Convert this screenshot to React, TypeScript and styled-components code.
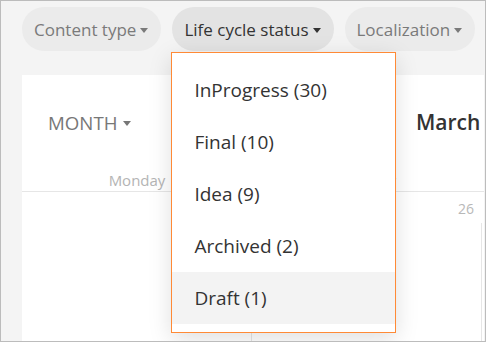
import React from 'react'
import styled, { createGlobalStyle } from 'styled-components';

const GlobalStyle = createGlobalStyle`
    html, body {
        margin: 0;
        padding: 0;
        background: #ffffff;
    }
    * {
        box-sizing: border-box;
    }
`

const Frame = styled.div`
    width: 486px;
    height: 342px;
    border: 1px solid #bcbcbc;
    background-color: #f4f4f4;
    font-family: "Open Sans", "Noto Sans", sans-serif;
    display: flex;
    flex-direction: column;
    overflow: hidden;
`

const Toolbar = styled.div`
    display: flex;
    gap: 11px;
    padding: 6px 0 0 21px;
`

const PillWrap = styled.div`
    position: relative;
`

const Pill = styled.div<{ active?: boolean }>`
    height: 44px;
    border-radius: 22px;
    padding: 0 13px 0 12px;
    display: flex;
    align-items: center;
    gap: 4px;
    font-size: 17px;
    white-space: nowrap;
    background-color: ${({ active }) => active ? '#e3e3e3' : '#ebebeb'};
    color: ${({ active }) => active ? '#333333' : '#7a7a7a'};
`

const Caret = styled.span`
    display: inline-block;
    width: 0;
    height: 0;
    border-left: 4.5px solid transparent;
    border-right: 4.5px solid transparent;
    border-top: 5px solid currentColor;
    margin-top: 2px;
`

const Menu = styled.ul`
    position: absolute;
    top: calc(100% + 1px);
    left: -1px;
    width: 225px;
    margin: 0;
    padding: 11px 0 8px;
    list-style: none;
    background-color: #ffffff;
    border: 1px solid #ff8a36;
    box-shadow: 0 6px 22px rgba(0, 0, 0, 0.13);
    z-index: 10;
`

const MenuItem = styled.li<{ hovered?: boolean }>`
    height: 52px;
    display: flex;
    align-items: center;
    padding-left: 22px;
    font-size: 19px;
    color: #333333;
    background-color: ${({ hovered }) => hovered ? '#f3f3f3' : 'transparent'};
`

const Card = styled.div`
    flex: 1;
    margin: 24px 1px 0 21px;
    background-color: #ffffff;
    display: flex;
    flex-direction: column;
    overflow: hidden;
`

const Header = styled.div`
    border-bottom: 1px solid #e6e6e6;
`

const TopBar = styled.div`
    height: 94px;
    display: grid;
    grid-template-columns: 368px auto;
    align-items: center;
    padding-left: 26px;
    white-space: nowrap;
`

const ViewSwitch = styled.div`
    display: flex;
    align-items: center;
    gap: 5px;
    font-size: 18.7px;
    color: #777777;
`

const Title = styled.div`
    font-size: 21px;
    font-weight: 600;
    color: #333333;
`

const DayNames = styled.div`
    display: grid;
    grid-template-columns: 230px 230px;
    height: 22px;
    align-items: center;
`

const DayName = styled.div`
    text-align: center;
    font-size: 15px;
    color: #b4b4b4;
`

const Week = styled.div`
    flex: 1;
    display: grid;
    grid-template-columns: 230px 230px;
`

const DayCell = styled.div<{ first?: boolean }>`
    display: flex;
    flex-direction: column;
    border-right: ${({ first }) => first ? '1px solid #e6e6e6' : 'none'};
`

const DayNumber = styled.div`
    height: 31px;
    padding: 7px 8px 0 0;
    text-align: right;
    font-size: 14px;
    color: #b8b8b8;
`

const DayBody = styled.div<{ first?: boolean }>`
    flex: 1;
    border-right: ${({ first }) => first ? 'none' : '1px solid #e6e6e6'};
`

const filters = ['Content type', 'Life cycle status', 'Localization'];

const statuses = [
    { label: 'InProgress', count: 30 },
    { label: 'Final', count: 10 },
    { label: 'Idea', count: 9 },
    { label: 'Archived', count: 2 },
    { label: 'Draft', count: 1 },
];

const App = () => {
    return (
        <>
            <GlobalStyle />
            <Frame>
                <Toolbar>
                    {filters.map((f) => (
                        <PillWrap key={f}>
                            <Pill active={f === 'Life cycle status'}>
                                {f}<Caret />
                            </Pill>
                            {f === 'Life cycle status' && (
                                <Menu>
                                    {statuses.map((s) => (
                                        <MenuItem key={s.label} hovered={s.label === 'Draft'}>
                                            {s.label} ({s.count})
                                        </MenuItem>
                                    ))}
                                </Menu>
                            )}
                        </PillWrap>
                    ))}
                </Toolbar>

                <Card>
                    <Header>
                        <TopBar>
                            <ViewSwitch>MONTH<Caret /></ViewSwitch>
                            <Title>March</Title>
                        </TopBar>
                        <DayNames>
                            <DayName>Monday</DayName>
                            <DayName>Tuesday</DayName>
                        </DayNames>
                    </Header>
                    <Week>
                        <DayCell first>
                            <DayNumber />
                            <DayBody first />
                        </DayCell>
                        <DayCell>
                            <DayNumber>26</DayNumber>
                            <DayBody />
                        </DayCell>
                    </Week>
                </Card>
            </Frame>
        </>
    )
};

export default App
